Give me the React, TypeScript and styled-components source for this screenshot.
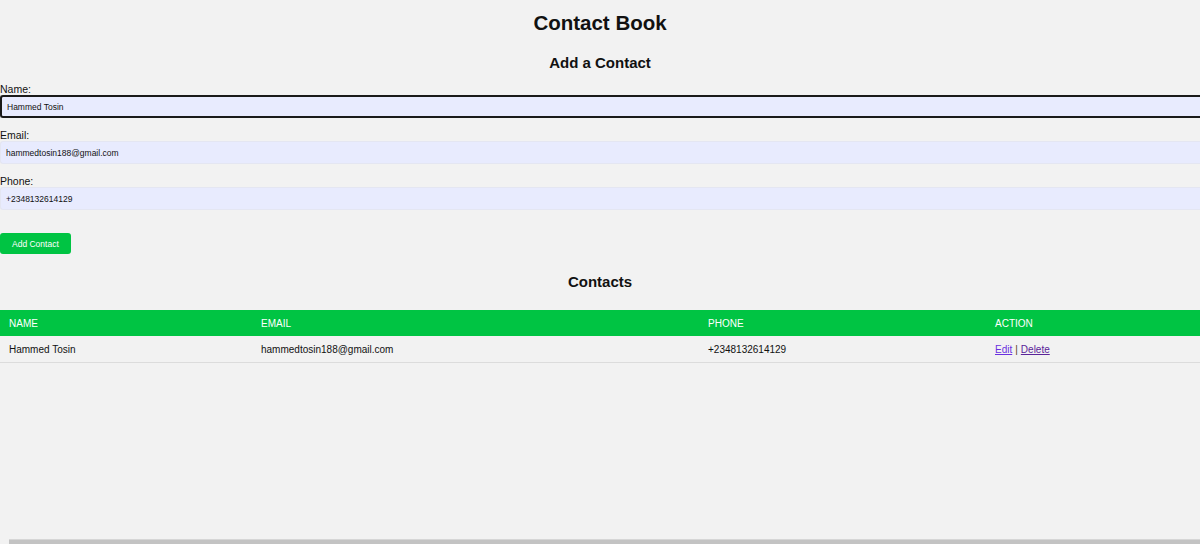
import React, { useState } from 'react';
import styled, { createGlobalStyle } from 'styled-components';

const GlobalStyle = createGlobalStyle`
  html, body {
    margin: 0;
    padding: 0;
    background-color: #f2f2f2;
    font-family: 'Liberation Sans', Arial, sans-serif;
    color: #111;
    overflow: hidden;
  }
`;

const Page = styled.div`
  display: flex;
  flex-direction: column;
  width: 100%;
`;

const Title = styled.h1`
  margin: 10px 0 0;
  font-size: 20.5px;
  line-height: 26px;
  font-weight: 700;
  text-align: center;
`;

const SectionTitle = styled.h2<{ $gap: number }>`
  margin: ${({ $gap }) => $gap}px 0 0;
  font-size: 15px;
  line-height: 20px;
  font-weight: 700;
  text-align: center;
`;

const Form = styled.form`
  display: flex;
  flex-direction: column;
  margin-top: 10px;
`;

const Field = styled.div`
  display: flex;
  flex-direction: column;
  margin-bottom: 11px;
`;

const Label = styled.label`
  font-size: 10.5px;
  line-height: 12px;
`;

const Input = styled.input<{ $focused?: boolean }>`
  box-sizing: border-box;
  width: 100%;
  height: 23px;
  padding: 0 5px;
  font-family: 'Liberation Sans', Arial, sans-serif;
  font-size: 8.5px;
  color: #111;
  background-color: #e8ebfe;
  border: ${({ $focused }) => ($focused ? '2px solid #1a1a1a' : '1px solid #e4e6f2')};
  border-right: none;
  border-radius: 3px 0 0 3px;
  outline: none;
`;

const SubmitButton = styled.button`
  align-self: flex-start;
  margin-top: 12px;
  height: 21px;
  padding: 0 12px;
  border: none;
  border-radius: 3px;
  background-color: #00c443;
  color: #fff;
  font-family: 'Liberation Sans', Arial, sans-serif;
  font-size: 8.5px;
  cursor: pointer;
`;

const Table = styled.table`
  margin-top: 18px;
  width: 100%;
  border-collapse: collapse;
  table-layout: fixed;
  font-size: 10px;
`;

const HeadCell = styled.th<{ $width?: number }>`
  width: ${({ $width }) => ($width ? `${$width - 18}px` : 'auto')};
  height: 26px;
  padding: 0 9px;
  background-color: #00c443;
  color: #fff;
  font-weight: 400;
  text-align: left;
  text-transform: uppercase;
`;

const Cell = styled.td`
  height: 26px;
  padding: 0 9px;
  border-bottom: 1px solid #dcdcdc;
  color: #111;
`;

const ActionLink = styled.a<{ $visited?: boolean }>`
  color: ${({ $visited }) => ($visited ? '#5b2499' : '#6a2fe0')};
  text-decoration: underline;
  cursor: pointer;
`;

const Separator = styled.span`
  color: #5a3a2a;
  margin: 0 3px;
`;

const ScrollBar = styled.div`
  position: fixed;
  left: 9px;
  right: 0;
  bottom: 0;
  height: 4px;
  background-color: #c3c3c3;
  border-top: 1px solid #d6d6d6;
`;

type Contact = { name: string; email: string; phone: string };

const columns = [
  { label: 'Name', width: 252 },
  { label: 'Email', width: 447 },
  { label: 'Phone', width: 287 },
  { label: 'Action' },
];

const App: React.FC = () => {
  const [name, setName] = useState('Hammed Tosin');
  const [email, setEmail] = useState('hammedtosin188@gmail.com');
  const [phone, setPhone] = useState('+2348132614129');
  const [contacts] = useState<Contact[]>([
    { name: 'Hammed Tosin', email: 'hammedtosin188@gmail.com', phone: '+2348132614129' },
  ]);

  return (
    <>
      <GlobalStyle />
      <Page>
        <Title>Contact Book</Title>
        <SectionTitle $gap={17}>Add a Contact</SectionTitle>
        <Form onSubmit={(e) => e.preventDefault()}>
          <Field>
            <Label>Name:</Label>
            <Input $focused value={name} onChange={(e) => setName(e.target.value)} />
          </Field>
          <Field>
            <Label>Email:</Label>
            <Input value={email} onChange={(e) => setEmail(e.target.value)} />
          </Field>
          <Field>
            <Label>Phone:</Label>
            <Input value={phone} onChange={(e) => setPhone(e.target.value)} />
          </Field>
          <SubmitButton type="submit">Add Contact</SubmitButton>
        </Form>
        <SectionTitle $gap={18}>Contacts</SectionTitle>
        <Table>
          <thead>
            <tr>
              {columns.map((c) => (
                <HeadCell key={c.label} $width={c.width}>
                  {c.label}
                </HeadCell>
              ))}
            </tr>
          </thead>
          <tbody>
            {contacts.map((c, idx) => (
              <tr key={idx}>
                <Cell>{c.name}</Cell>
                <Cell>{c.email}</Cell>
                <Cell>{c.phone}</Cell>
                <Cell>
                  <ActionLink>Edit</ActionLink>
                  <Separator>|</Separator>
                  <ActionLink $visited>Delete</ActionLink>
                </Cell>
              </tr>
            ))}
          </tbody>
        </Table>
      </Page>
      <ScrollBar />
    </>
  );
};

export default App;
